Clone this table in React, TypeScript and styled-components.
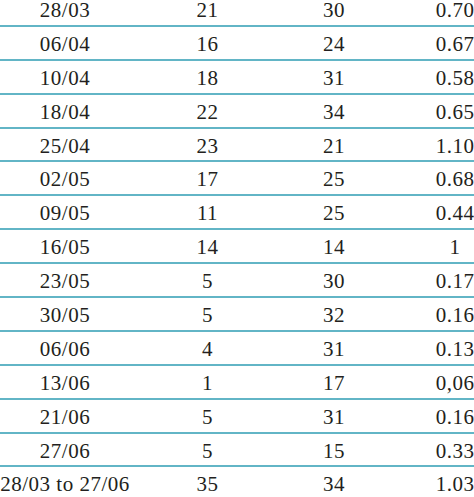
import React from 'react'
import styled, { createGlobalStyle } from 'styled-components'

const GlobalStyle = createGlobalStyle`
  html, body {
    margin: 0;
    padding: 0;
    background: #fff;
    overflow: hidden;
  }
`

const Table = styled.div`
  width: 474px;
  overflow: hidden;
  display: flex;
  flex-direction: column;
  font-family: 'Liberation Serif', 'Times New Roman', serif;
  font-size: 21px;
  letter-spacing: 0.5px;
  color: #231f20;
`

const Row = styled.div<{ $last?: boolean; $first?: boolean }>`
  display: grid;
  grid-template-columns: 130px 155px 98px 144px;
  height: ${(p) => (p.$first ? '24.9px' : '31.9px')};
  border-bottom: ${(p) => (p.$last ? 'none' : '2px solid #62b5c6')};
`

const Cell = styled.div<{ $first?: boolean }>`
  text-align: center;
  white-space: nowrap;
  padding-top: ${(p) => (p.$first ? '0' : '3px')};
  line-height: ${(p) => (p.$first ? '21px' : '28.9px')};
`

const rows: [string, string, string, string][] = [
  ['28/03', '21', '30', '0.70'],
  ['06/04', '16', '24', '0.67'],
  ['10/04', '18', '31', '0.58'],
  ['18/04', '22', '34', '0.65'],
  ['25/04', '23', '21', '1.10'],
  ['02/05', '17', '25', '0.68'],
  ['09/05', '11', '25', '0.44'],
  ['16/05', '14', '14', '1'],
  ['23/05', '5', '30', '0.17'],
  ['30/05', '5', '32', '0.16'],
  ['06/06', '4', '31', '0.13'],
  ['13/06', '1', '17', '0,06'],
  ['21/06', '5', '31', '0.16'],
  ['27/06', '5', '15', '0.33'],
  ['28/03 to 27/06', '35', '34', '1.03'],
]

const App: React.FC = () => {
  return (
    <>
      <GlobalStyle />
      <Table>
        {rows.map((r, i) => (
          <Row key={i} $first={i === 0} $last={i === rows.length - 1}>
            {r.map((c, j) => (
              <Cell key={j} $first={i === 0}>
                {c}
              </Cell>
            ))}
          </Row>
        ))}
      </Table>
    </>
  )
}

export default App
